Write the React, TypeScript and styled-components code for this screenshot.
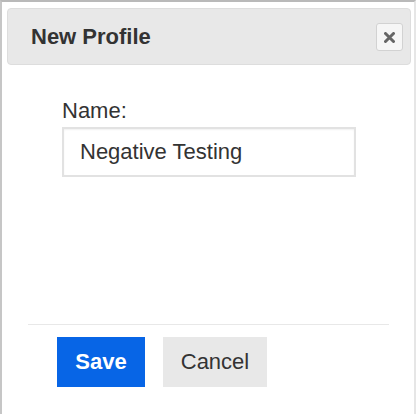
import React from 'react'
import styled, { createGlobalStyle } from 'styled-components'

const GlobalStyle = createGlobalStyle`
    html, body {
        margin: 0;
        padding: 0;
        background: #ffffff;
    }
    body {
        font-family: "Liberation Sans", Arial, sans-serif;
    }
`

const Frame = styled.div`
    width: 416px;
    height: 414px;
    box-sizing: border-box;
    display: flex;
    flex-direction: column;
    background: #ffffff;
    border-top: 2px solid #b9b9b9;
    border-left: 2px solid #c6c6c6;
    border-right: 2px solid #e6e6e6;
    padding: 6px 3px 0 5px;
`

const Header = styled.div`
    height: 57px;
    box-sizing: border-box;
    display: flex;
    align-items: center;
    justify-content: space-between;
    padding: 0 7px 0 23px;
    background: #e8e8e8;
    border: 1px solid #dddddd;
    border-radius: 4px;
`

const Title = styled.h3`
    margin: 0;
    font-size: 22px;
    font-weight: bold;
    color: #333333;
`

const CloseButton = styled.button`
    width: 27px;
    height: 28px;
    box-sizing: border-box;
    display: flex;
    align-items: center;
    justify-content: center;
    padding: 0;
    margin-top: 1px;
    background: #f6f6f6;
    border: 1px solid #d2d2d2;
    border-radius: 3px;
    color: #666666;
`

const Body = styled.div`
    flex: 1;
    padding: 33px 0 0 55px;
`

const Label = styled.label`
    display: block;
    font-size: 22px;
    line-height: 26px;
    color: #333333;
    margin-bottom: 3px;
`

const TextInput = styled.input`
    width: 294px;
    height: 50px;
    box-sizing: border-box;
    padding: 0 0 0 16px;
    border: 2px solid #e2e2e2;
    box-shadow: inset 0 1px 2px rgba(0, 0, 0, 0.06);
    font-family: "Liberation Sans", Arial, sans-serif;
    font-size: 22px;
    color: #333333;
    outline: none;
`

const Footer = styled.div`
    display: flex;
    gap: 18px;
    margin: 0 22px 0 21px;
    padding: 12px 0 27px 29px;
    border-top: 1px solid #e8e8e8;
`

const Button = styled.button<{ primary?: boolean }>`
    height: 50px;
    box-sizing: border-box;
    padding: 0;
    width: ${({ primary }) => (primary ? '88px' : '104px')};
    border: none;
    border-radius: 0;
    background: ${({ primary }) => (primary ? '#0765e6' : '#e8e8e8')};
    color: ${({ primary }) => (primary ? '#ffffff' : '#333333')};
    font-family: "Liberation Sans", Arial, sans-serif;
    font-size: 22px;
    font-weight: ${({ primary }) => (primary ? 'bold' : 'normal')};
`

const CloseIcon = () => (
    <svg width="11" height="11" viewBox="0 0 11 11">
        <path d="M1.5 1.5 L9.5 9.5 M9.5 1.5 L1.5 9.5" stroke="currentColor" strokeWidth="3" strokeLinecap="round" />
    </svg>
)

const App: React.FC = () => {
    return (
        <>
            <GlobalStyle />
            <Frame>
                <Header>
                    <Title>New Profile</Title>
                    <CloseButton aria-label="Close">
                        <CloseIcon />
                    </CloseButton>
                </Header>
                <Body>
                    <Label htmlFor="profile-name">Name:</Label>
                    <TextInput id="profile-name" defaultValue="Negative Testing" />
                </Body>
                <Footer>
                    <Button primary>Save</Button>
                    <Button>Cancel</Button>
                </Footer>
            </Frame>
        </>
    )
}

export default App
